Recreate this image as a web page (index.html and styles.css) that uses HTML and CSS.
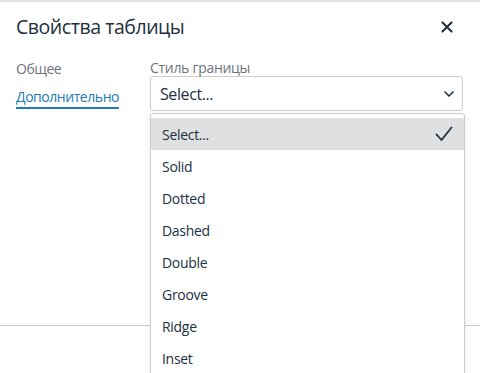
FILE: index.html
```html
<!DOCTYPE html>
<html lang="ru">
<head>
<meta charset="utf-8">
<link rel="stylesheet" href="styles.css">
</head>
<body>
<div class="dialog">
  <div class="header">
    <div class="title">Свойства таблицы</div>
    <button class="close" aria-label="Закрыть">
      <svg width="24" height="24" viewBox="0 0 24 24"><path d="M17.3 8.2 13.4 12l3.9 3.8a1 1 0 0 1-1.5 1.5L12 13.4l-3.8 3.9a1 1 0 0 1-1.5-1.5l3.9-3.8-3.9-3.8a1 1 0 0 1 1.5-1.5l3.8 3.9 3.8-3.9a1 1 0 0 1 1.5 1.5Z" fill="#222f3e"/></svg>
    </button>
  </div>
  <div class="body">
    <div class="tabs">
      <div class="tab">Общее</div>
      <div class="tab active">Дополнительно</div>
    </div>
    <div class="panel">
      <div class="label">Стиль границы</div>
      <div class="select">
        <span>Select...</span>
        <svg width="10" height="6" viewBox="0 0 10 6"><path d="M1 1l4 4 4-4" fill="none" stroke="#222f3e" stroke-width="1.6" stroke-linecap="round" stroke-linejoin="round"/></svg>
      </div>
    </div>
  </div>
  <div class="footer"></div>
  <div class="menu">
    <div class="item selected"><span>Select...</span>
      <svg width="18" height="16" viewBox="0 0 18 16"><path d="M1.5 8.5l5 5.5L16.5 1.5" fill="none" stroke="#222f3e" stroke-width="1.8" stroke-linecap="round" stroke-linejoin="round"/></svg>
    </div>
    <div class="item">Solid</div>
    <div class="item">Dotted</div>
    <div class="item">Dashed</div>
    <div class="item">Double</div>
    <div class="item">Groove</div>
    <div class="item">Ridge</div>
    <div class="item">Inset</div>
  </div>
</div>
</body>
</html>
```
FILE: styles.css
```css
html, body {
  margin: 0;
  padding: 0;
  background: #fff;
}
body {
  font-family: "Open Sans", "Noto Sans", sans-serif;
  color: #222f3e;
  overflow: hidden;
}
.dialog {
  position: relative;
  width: 480px;
  height: 373px;
  border-top: 2px solid #e2e3e5;
  box-sizing: border-box;
}
.header {
  display: flex;
  align-items: center;
  justify-content: space-between;
  padding: 12px 16px 0 16px;
  height: 26px;
}
.title {
  font-size: 19.5px;
  line-height: 26px;
  letter-spacing: -0.45px;
}
.close {
  border: 0;
  background: none;
  padding: 0;
  width: 24px;
  height: 24px;
  margin-right: 5px;
  display: flex;
}
.body {
  display: flex;
  padding-top: 19px;
  box-sizing: border-box;
  height: 285px;
}
.tabs {
  display: flex;
  flex-direction: column;
  gap: 6px;
  width: 150px;
  flex: none;
  padding-left: 16px;
  box-sizing: border-box;
}
.tab {
  font-size: 14px;
  line-height: 20px;
  color: #6d737b;
  align-self: flex-start;
  letter-spacing: -0.45px;
  border-bottom: 2px solid transparent;
}
.tab.active {
  color: #207ab7;
  border-bottom-color: #207ab7;
}
.panel {
  width: 313px;
  flex: none;
}
.label {
  font-size: 14px;
  line-height: 17px;
  color: #6d737b;
  letter-spacing: -0.3px;
}
.select {
  margin-top: 0;
  height: 35px;
  border: 1px solid #cccccc;
  border-radius: 3px;
  box-sizing: border-box;
  display: flex;
  align-items: center;
  justify-content: space-between;
  padding: 0 8px 0 9px;
  font-size: 16px;
  letter-spacing: -0.4px;
}
.footer {
  border-top: 1px solid #cccccc;
}
.menu {
  position: absolute;
  left: 150px;
  top: 111px;
  width: 315px;
  border: 1px solid #cccccc;
  border-radius: 3px;
  box-shadow: 0 4px 8px rgba(34, 47, 62, 0.1);
  background: #fff;
  padding: 4px 0;
  box-sizing: border-box;
}
.item {
  height: 32px;
  display: flex;
  align-items: center;
  justify-content: space-between;
  padding: 0 11px 0 11px;
  font-size: 14px;
  letter-spacing: -0.3px;
}
.item.selected {
  background: #dee0e2;
}
```
